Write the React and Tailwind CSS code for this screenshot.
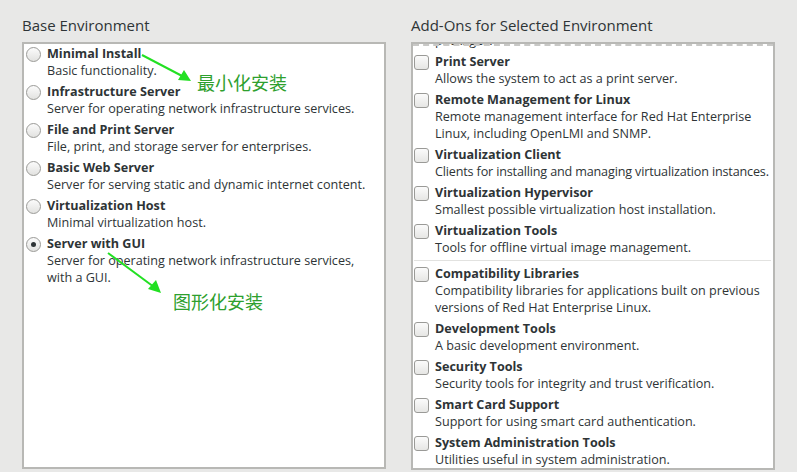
import React from 'react';

const baseEnvs = [
  { name: 'Minimal Install', desc: ['Basic functionality.'] },
  { name: 'Infrastructure Server', desc: ['Server for operating network infrastructure services.'] },
  { name: 'File and Print Server', desc: ['File, print, and storage server for enterprises.'] },
  { name: 'Basic Web Server', desc: ['Server for serving static and dynamic internet content.'] },
  { name: 'Virtualization Host', desc: ['Minimal virtualization host.'] },
  { name: 'Server with GUI', desc: ['Server for operating network infrastructure services,', 'with a GUI.'], checked: true },
];

const addonsTop = [
  { name: 'Print Server', desc: ['Allows the system to act as a print server.'] },
  { name: 'Remote Management for Linux', desc: ['Remote management interface for Red Hat Enterprise', 'Linux, including OpenLMI and SNMP.'] },
  { name: 'Virtualization Client', desc: ['Clients for installing and managing virtualization instances.'], tight: true },
  { name: 'Virtualization Hypervisor', desc: ['Smallest possible virtualization host installation.'] },
  { name: 'Virtualization Tools', desc: ['Tools for offline virtual image management.'] },
];

const addonsBottom = [
  { name: 'Compatibility Libraries', desc: ['Compatibility libraries for applications built on previous', 'versions of Red Hat Enterprise Linux.'] },
  { name: 'Development Tools', desc: ['A basic development environment.'] },
  { name: 'Security Tools', desc: ['Security tools for integrity and trust verification.'] },
  { name: 'Smart Card Support', desc: ['Support for using smart card authentication.'] },
  { name: 'System Administration Tools', desc: ['Utilities useful in system administration.'] },
];

const font = { fontFamily: '"Open Sans", "DejaVu Sans", sans-serif' };
const cjk = { fontFamily: '"Noto Sans CJK SC", sans-serif' };

const Radio = ({ checked }) => (
  <span className="mt-[2px] w-[15px] h-[15px] shrink-0 rounded-full border border-[#9a9a97] bg-gradient-to-b from-[#fbfbfb] to-[#e2e2e0] flex items-center justify-center">
    {checked && <span className="w-[5px] h-[5px] rounded-full bg-[#2e3436]" />}
  </span>
);

const Check = () => (
  <span className="mt-[2px] w-[15px] h-[15px] shrink-0 rounded-[3px] border border-[#9a9a97] bg-gradient-to-b from-[#fbfbfb] to-[#e6e6e4]" />
);

const Item = ({ item, control }) => (
  <div className="flex gap-[6px]">
    {control}
    <div className="text-[12.6px] leading-[17px] text-[#2e3436] whitespace-nowrap">
      <div className="font-bold">{item.name}</div>
      {item.desc.map((d) => (
        <div key={d} className={item.tight ? 'tracking-[-0.16px]' : ''}>{d}</div>
      ))}
    </div>
  </div>
);

export default function App() {
  return (
    <div className="w-[797px] h-[472px] bg-[#e8e8e7] overflow-hidden relative" style={font}>
      <div className="flex gap-[25px] pl-[22px] pt-[15px]">
        {/* base environment */}
        <div className="w-[364px]">
          <div className="text-[15px] leading-[20px] text-[#2e3436] mb-[7px]">Base Environment</div>
          <div className="h-[427px] bg-white border-2 border-[#b8b8b5] pl-[2px] pt-[1px] flex flex-col gap-[4px]">
            {baseEnvs.map((e) => <Item key={e.name} item={e} control={<Radio checked={e.checked} />} />)}
          </div>
        </div>

        {/* add-ons */}
        <div className="w-[364px]">
          <div className="text-[15px] leading-[20px] text-[#2e3436] mb-[7px]">Add-Ons for Selected Environment</div>
          <div className="h-[428px] bg-white border-2 border-[#b8b8b5] relative overflow-hidden pl-[1px]">
            <div className="absolute left-0 right-0 top-0 border-t-2 border-dashed border-[#c8c8c6]" />
            <div className="mt-[-12px] flex flex-col gap-[4px]">
              <div className="pl-[21px] text-[12.6px] leading-[17px] text-[#2e3436]">packages.</div>
              {addonsTop.map((e) => <Item key={e.name} item={e} control={<Check />} />)}
            </div>
            <div className="my-[4px] mr-[2px] border-t border-[#e2e2e0]" />
            <div className="flex flex-col gap-[4px]">
              {addonsBottom.map((e) => <Item key={e.name} item={e} control={<Check />} />)}
            </div>
          </div>
        </div>
      </div>

      {/* annotations */}
      <svg className="absolute left-0 top-0" width="797" height="472">
        <line x1="142" y1="55" x2="184" y2="77" stroke="#22e022" strokeWidth="2" />
        <polygon points="191,81 178,80 184,70" fill="#22e022" />
        <line x1="108" y1="253" x2="154" y2="287" stroke="#22e022" strokeWidth="2" />
        <polygon points="161,293 148,289 156,280" fill="#22e022" />
      </svg>
      <div className="absolute left-[197px] top-[71px] text-[18px] leading-[22px] text-[#2ea02e]" style={cjk}>最小化安装</div>
      <div className="absolute left-[173px] top-[290px] text-[18px] leading-[22px] text-[#2ea02e]" style={cjk}>图形化安装</div>
    </div>
  );
}
